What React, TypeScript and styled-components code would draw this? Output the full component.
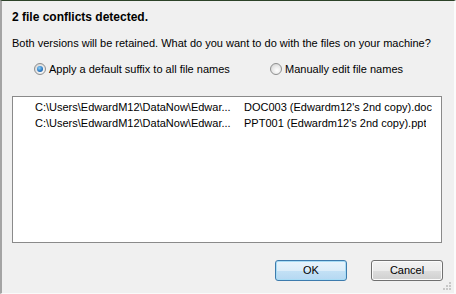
import React from "react";
import styled, { createGlobalStyle } from "styled-components";

const Global = createGlobalStyle`
  html, body { margin: 0; padding: 0; background: #f0f0f0; }
  body { font-family: "Liberation Sans", Arial, sans-serif; }
`;

const Dialog = styled.div`
  width: 456px;
  height: 294px;
  box-sizing: border-box;
  background: #f0f0f0;
  border-top: 1px solid #2c4228;
  border-left: 2px solid #a4a4a4;
  border-right: 2px solid #fbfbfb;
  border-bottom: 1px solid #fafafa;
  display: flex;
  flex-direction: column;
  padding: 0 12px 0 10px;
  font-size: 11px;
  line-height: 14px;
  color: #000;
  position: relative;
`;

const Title = styled.div`
  font-weight: bold;
  font-size: 12px;
  margin-top: 9px;
  height: 14px;
`;

const Message = styled.div`
  margin-top: 12px;
  height: 14px;
  white-space: nowrap;
`;

const RadioRow = styled.div`
  display: flex;
  margin-top: 12px;
  padding-left: 22px;
  height: 14px;
  align-items: center;
`;

const RadioLabel = styled.label<{ $w?: number }>`
  display: flex;
  align-items: center;
  gap: 3px;
  width: ${(p) => (p.$w ? `${p.$w}px` : "auto")};
  white-space: nowrap;
`;

const Dot = styled.span<{ $on?: boolean }>`
  width: 12px;
  height: 12px;
  border-radius: 50%;
  box-sizing: border-box;
  border: 1px solid #8e8f8f;
  background: radial-gradient(circle at 60% 65%, #ffffff 0%, #e6e6e6 55%, #c9c9c9 100%);
  display: flex;
  align-items: center;
  justify-content: center;
  &::after {
    content: "";
    display: ${(p) => (p.$on ? "block" : "none")};
    width: 6px;
    height: 6px;
    border-radius: 50%;
    background: radial-gradient(circle at 40% 35%, #8fd0f5 0%, #2f7fc8 55%, #123f7c 100%);
  }
`;

const List = styled.div`
  margin-top: 20px;
  height: 147px;
  background: #fff;
  border: 1px solid #8a8a8a;
  box-sizing: border-box;
  padding-top: 2px;
`;

const Row = styled.div`
  display: flex;
  height: 16px;
  align-items: center;
  padding-left: 22px;
`;

const Cell = styled.div<{ $w?: number }>`
  width: ${(p) => (p.$w ? `${p.$w}px` : "auto")};
  white-space: nowrap;
  overflow: hidden;
`;

const Buttons = styled.div`
  display: flex;
  justify-content: flex-end;
  gap: 24px;
  margin-top: 17px;
  margin-right: -1px;
`;

const Button = styled.button<{ $default?: boolean }>`
  width: 72px;
  height: 21px;
  font-family: inherit;
  font-size: 11px;
  line-height: 13px;
  border-radius: 3px;
  border: 1px solid ${(p) => (p.$default ? "#3d7bad" : "#707070")};
  background: ${(p) =>
    p.$default
      ? "linear-gradient(#e8f4fc 0%, #dcedf9 50%, #c3e1f5 51%, #b5d8f2 100%)"
      : "linear-gradient(#f2f2f2 0%, #ebebeb 50%, #dddddd 51%, #cfcfcf 100%)"};
  box-shadow: inset 0 0 0 1px ${(p) => (p.$default ? "#a8dcf5" : "#fbfbfb")};
  color: #000;
  padding: 0;
`;

const Grip = styled.svg`
  position: absolute;
  right: 2px;
  bottom: 2px;
`;

export default function App() {
  return (
    <>
      <Global />
      <Dialog>
        <Title>2 file conflicts detected.</Title>
        <Message>Both versions will be retained. What do you want to do with the files on your machine?</Message>
        <RadioRow>
          <RadioLabel $w={236}>
            <Dot $on />
            Apply a default suffix to all file names
          </RadioLabel>
          <RadioLabel>
            <Dot />
            Manually edit file names
          </RadioLabel>
        </RadioRow>
        <List>
          <Row>
            <Cell $w={209}>C:\Users\EdwardM12\DataNow\Edwar...</Cell>
            <Cell>DOC003 (Edwardm12's 2nd copy).doc</Cell>
          </Row>
          <Row>
            <Cell $w={209}>C:\Users\EdwardM12\DataNow\Edwar...</Cell>
            <Cell>PPT001 (Edwardm12's 2nd copy).ppt</Cell>
          </Row>
        </List>
        <Buttons>
          <Button $default>OK</Button>
          <Button>Cancel</Button>
        </Buttons>
        <Grip width="10" height="10" viewBox="0 0 10 10">
          {[
            [7, 1],
            [4, 4],
            [7, 4],
            [1, 7],
            [4, 7],
            [7, 7],
          ].map(([x, y], i) => (
            <rect key={i} x={x} y={y} width="2" height="2" fill="#c8c8c8" />
          ))}
        </Grip>
      </Dialog>
    </>
  );
}
